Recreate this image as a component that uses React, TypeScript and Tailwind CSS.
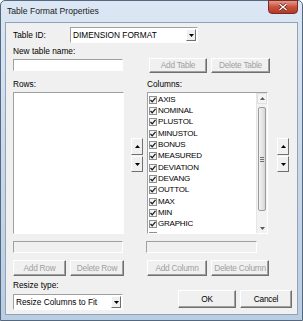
import React from "react";

const font = { fontFamily: '"Liberation Sans", Arial, sans-serif' };

function Btn({ label, w, disabled = false, h = 16 }: { label: string; w: number; disabled?: boolean; h?: number }) {
  return (
    <div
      className={`flex items-center justify-center whitespace-nowrap tracking-[-0.25px] border border-t-[#ffffff] border-l-[#ffffff] border-r-[#6f6f6f] border-b-[#6f6f6f] bg-[#f0f0f0] shadow-[inset_-1px_-1px_0_#a0a0a0] ${disabled ? "text-[#a0a0a0]" : "text-black"}`}
      style={{ width: w, height: h }}
    >
      {label}
    </div>
  );
}

function Arrow({ up }: { up: boolean }) {
  return (
    <svg width="5" height="3" viewBox="0 0 5 3">
      {up ? <path d="M0 3 L2.5 0 L5 3 Z" fill="#000" /> : <path d="M0 0 L2.5 3 L5 0 Z" fill="#000" />}
    </svg>
  );
}

function ArrowBtns() {
  return (
    <div className="flex flex-col gap-[1px] pt-[46px]">
      <div className="flex h-[17px] w-[12px] items-center justify-center border border-t-white border-l-white border-r-[#6f6f6f] border-b-[#6f6f6f] bg-[#f0f0f0]">
        <Arrow up />
      </div>
      <div className="flex h-[16px] w-[12px] items-center justify-center border border-t-white border-l-white border-r-[#6f6f6f] border-b-[#6f6f6f] bg-[#f0f0f0]">
        <Arrow up={false} />
      </div>
    </div>
  );
}

function Check() {
  return (
    <div className="flex h-[8px] w-[8px] shrink-0 items-center justify-center border border-[#8e8f8f] bg-[#f4f4f4]">
      <svg width="6" height="6" viewBox="0 0 6 6">
        <path d="M0.5 3 L2.2 4.8 L5.5 0.8" stroke="#1c1c1c" strokeWidth="1.3" fill="none" />
      </svg>
    </div>
  );
}

const columns = [
  "AXIS",
  "NOMINAL",
  "PLUSTOL",
  "MINUSTOL",
  "BONUS",
  "MEASURED",
  "DEVIATION",
  "DEVANG",
  "OUTTOL",
  "MAX",
  "MIN",
  "GRAPHIC",
  "AUTOGRIDID",
];

function DropBtn() {
  return (
    <div className="flex h-full w-[10px] items-center justify-center border border-t-white border-l-white border-r-[#6f6f6f] border-b-[#6f6f6f] bg-[#f0f0f0]">
      <Arrow up={false} />
    </div>
  );
}

export default function App() {
  return (
    <div className="h-[321px] w-[303px] text-[8.3px] leading-none text-black" style={font}>
      <div className="relative flex h-full w-full flex-col rounded-t-[5px] border border-[#55687d] bg-gradient-to-b from-[#dbe7f4] via-[#c9d9eb] to-[#b9cde3]">
        {/* title bar */}
        <div className="flex h-[21px] shrink-0 items-center pl-[6px] text-[8.6px] text-[#1b1b1b]">Table Format Properties</div>
        <div className="absolute right-[4px] top-[-1px] flex h-[14px] w-[30px] items-center justify-center rounded-b-[4px] border border-[#7a2a22] bg-gradient-to-b from-[#e19a8c] via-[#c9503d] to-[#b33a26]">
          <svg width="10" height="8" viewBox="0 0 10 8">
            <path d="M1.5 1 L8.5 7 M8.5 1 L1.5 7" stroke="#5a1a14" strokeWidth="2.6" />
            <path d="M1.5 1 L8.5 7 M8.5 1 L1.5 7" stroke="#ffffff" strokeWidth="1.4" />
          </svg>
        </div>
        {/* client */}
        <div className="mx-[4px] mb-[5px] flex flex-1 flex-col border border-[#93a3b6] bg-[#f0f0f0] pl-[7px]">
          <div className="mt-[4px] flex h-[16px] items-center">
            <div className="w-[57px]">Table ID:</div>
            <div className="flex h-[16px] w-[128px] items-center border border-t-[#a0a0a0] border-l-[#a0a0a0] border-r-white border-b-white bg-white pl-[2px] pr-[1px] py-[1px]">
              <div className="flex-1">DIMENSION FORMAT</div>
              <DropBtn />
            </div>
          </div>
          <div className="mt-[4px] h-[8px]">New table name:</div>
          <div className="mt-[2px] flex h-[16px] items-center">
            <div className="h-[12px] w-[110px] border border-t-[#a0a0a0] border-l-[#a0a0a0] border-r-white border-b-white bg-white" />
            <div className="ml-[26px]">
              <Btn label="Add Table" w={58} disabled h={15} />
            </div>
            <div className="ml-[4px]">
              <Btn label="Delete Table" w={59} disabled h={15} />
            </div>
          </div>
          <div className="mt-[7px] flex h-[8px]">
            <div className="w-[134px]">Rows:</div>
            <div>Columns:</div>
          </div>
          <div className="mt-[4px] flex h-[142px]">
            <div className="h-full w-[111px] border border-t-[#a0a0a0] border-l-[#a0a0a0] border-r-white border-b-white bg-white" />
            <div className="ml-[7px]">
              <ArrowBtns />
            </div>
            <div className="ml-[4px] flex h-full w-[121px] border border-t-[#a0a0a0] border-l-[#a0a0a0] border-r-white border-b-white bg-white">
              <div className="flex flex-1 flex-col overflow-hidden pl-[1px] pt-[1px]">
                {columns.map((c) => (
                  <div key={c} className="flex h-[11.35px] shrink-0 items-center gap-[1px]">
                    <Check />
                    <span className="text-[8px] tracking-[-0.2px]">{c}</span>
                  </div>
                ))}
              </div>
              <div className="flex w-[11px] flex-col border-l border-[#e6e6e6] bg-[#f2f2f2]">
                <div className="flex h-[11px] items-center justify-center border border-[#e0e0e0] bg-[#f4f4f4]">
                  <svg width="5" height="3" viewBox="0 0 5 3">
                    <path d="M0 3 L2.5 0 L5 3 Z" fill="#5b5b5b" />
                  </svg>
                </div>
                <div className="mx-[1px] mt-[3px] flex h-[104px] items-center justify-center rounded-[2px] border border-[#9b9b9b] bg-gradient-to-r from-[#f3f3f3] via-[#e6e6e6] to-[#d5d5d5]">
                  <div className="flex flex-col gap-[1px]">
                    <div className="h-[1px] w-[4px] bg-[#6f6f6f]" />
                    <div className="h-[1px] w-[4px] bg-[#6f6f6f]" />
                    <div className="h-[1px] w-[4px] bg-[#6f6f6f]" />
                  </div>
                </div>
                <div className="flex-1" />
                <div className="flex h-[10px] items-center justify-center">
                  <svg width="5" height="3" viewBox="0 0 5 3">
                    <path d="M0 0 L2.5 3 L5 0 Z" fill="#5b5b5b" />
                  </svg>
                </div>
              </div>
            </div>
            <div className="ml-[9px]">
              <ArrowBtns />
            </div>
          </div>
          <div className="mt-[7px] flex h-[12px]">
            <div className="h-full w-[110px] border border-t-[#a0a0a0] border-l-[#a0a0a0] border-r-white border-b-white bg-[#f0f0f0]" />
            <div className="ml-[23px] h-full w-[111px] border border-t-[#a0a0a0] border-l-[#a0a0a0] border-r-white border-b-white bg-[#f0f0f0]" />
          </div>
          <div className="mt-[7px] flex h-[16px]">
            <Btn label="Add Row" w={53} disabled />
            <div className="ml-[4px]">
              <Btn label="Delete Row" w={54} disabled />
            </div>
            <div className="ml-[23px]">
              <Btn label="Add Column" w={60} disabled />
            </div>
            <div className="ml-[4px]">
              <Btn label="Delete Column" w={58} disabled />
            </div>
          </div>
          <div className="mt-[4px] flex">
            <div className="flex flex-col">
              <div className="mt-[1px] h-[8px]">Resize type:</div>
              <div className="mt-[5px] flex h-[16px] w-[110px] items-center border border-t-[#a0a0a0] border-l-[#a0a0a0] border-r-white border-b-white bg-white pl-[2px] pr-[1px] py-[1px]">
                <div className="flex-1">Resize Columns to Fit</div>
                <DropBtn />
              </div>
            </div>
            <div className="ml-[55px] mt-[10px] flex">
              <Btn label="OK" w={58} h={18} />
              <div className="ml-[4px]">
                <Btn label="Cancel" w={52} h={18} />
              </div>
            </div>
          </div>
        </div>
      </div>
    </div>
  );
}
